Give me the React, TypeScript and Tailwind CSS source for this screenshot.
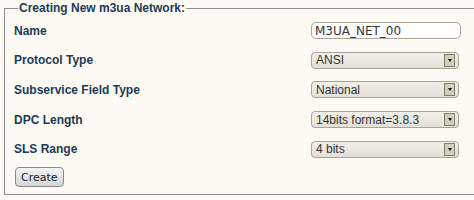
import React from "react";

const rows: { label: string; value: string; select: boolean }[] = [
  { label: "Name", value: "M3UA_NET_00", select: false },
  { label: "Protocol Type", value: "ANSI", select: true },
  { label: "Subservice Field Type", value: "National", select: true },
  { label: "DPC Length", value: "14bits format=3.8.3", select: true },
  { label: "SLS Range", value: "4 bits", select: true },
];

function Select({ value }: { value: string }) {
  return (
    <div className="flex h-[17px] w-[148px] items-center justify-between rounded-[4px] border border-[#a7a397] bg-gradient-to-b from-[#f2efe9] to-[#e4e0d7] pl-[4px] pr-[3px]">
      <span className="text-[12px] leading-none text-[#333]">{value}</span>
      <span className="flex h-[13px] w-[11px] items-center justify-center border border-[#827c6f] bg-[#d3ccbd]">
        <span className="h-0 w-0 border-x-[2.5px] border-t-[3px] border-x-transparent border-t-[#111]" />
      </span>
    </div>
  );
}

export default function App() {
  return (
    <div className="h-[200px] w-[474px] overflow-hidden bg-[#fdfbf4] pt-[1px] font-['Liberation_Sans',Arial,sans-serif]">
      <fieldset className="ml-[4px] mr-[-10px] h-[194px] border border-[#8d8d8d] pl-[9px]">
        <legend className="ml-[4px] px-[1px] text-[12px] font-bold leading-[14px] text-[#1e3a56]">
          Creating New m3ua Network:
        </legend>
        <div className="mt-[1px] flex flex-col">
          {rows.map((r) => (
            <div key={r.label} className="flex h-[29.6px] items-center">
              <span className="w-[297px] text-[12px] font-bold text-[#1e3a56]">{r.label}</span>
              {r.select ? (
                <Select value={r.value} />
              ) : (
                <div className="flex h-[17px] w-[150px] items-center rounded-[5px] border border-[#a9a59b] bg-white pl-[3px]">
                  <span className="font-['DejaVu_Sans',sans-serif] text-[12px] leading-none text-[#333]">{r.value}</span>
                </div>
              )}
            </div>
          ))}
        </div>
        <button className="mt-[2px] ml-[1px] h-[20px] rounded-[4px] border border-[#8a8a8a] bg-gradient-to-b from-[#f3f3f3] to-[#d6d6d6] px-[5px] font-['DejaVu_Sans',sans-serif] text-[11px] leading-none text-[#222]">
          Create
        </button>
      </fieldset>
    </div>
  );
}
